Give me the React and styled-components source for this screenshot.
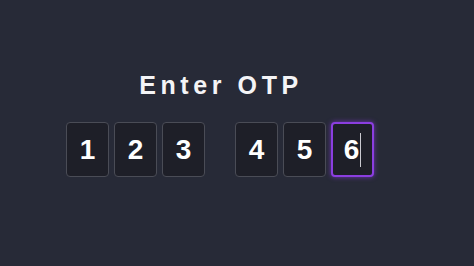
import React from "react";
import styled, { createGlobalStyle } from "styled-components";

const Global = createGlobalStyle`
  html, body { margin: 0; padding: 0; background: #272a37; }
  body { font-family: "Liberation Sans", Arial, sans-serif; }
`;

const Page = styled.div`
  width: 440px;
  height: 266px;
  display: flex;
  flex-direction: column;
  align-items: center;
  padding-top: 70px;
  box-sizing: border-box;
`;

const Title = styled.h1`
  margin: 0 0 21px 2px;
  font-size: 25px;
  line-height: 31px;
  font-weight: 700;
  letter-spacing: 4.6px;
  color: #f4f4f6;
`;

const Row = styled.div`
  display: flex;
  gap: 30px;
`;

const Group = styled.div`
  display: flex;
  gap: 5px;
`;

const Cell = styled.div`
  width: 43px;
  height: 55px;
  box-sizing: border-box;
  border-radius: 4px;
  background: #1e1f28;
  border: ${(p) => (p.$active ? "2px solid #8b3ee0" : "1px solid #4a4c56")};
  box-shadow: ${(p) => (p.$active ? "0 0 5px rgba(140, 60, 230, 0.7)" : "none")};
  display: flex;
  align-items: center;
  justify-content: center;
  color: #ffffff;
  font-size: 28px;
  font-weight: 700;
  line-height: 1;
`;

const Caret = styled.span`
  display: inline-block;
  width: 1px;
  height: 34px;
  margin-left: 1px;
  background: #c9c9d0;
`;

export default function App() {
  const first = ["1", "2", "3"];
  const second = ["4", "5", "6"];
  return (
    <>
      <Global />
      <Page>
        <Title>Enter OTP</Title>
        <Row>
          <Group>
            {first.map((d) => (
              <Cell key={d}>{d}</Cell>
            ))}
          </Group>
          <Group>
            {second.map((d, i) => (
              <Cell key={d} $active={i === 2}>
                {d}
                {i === 2 && <Caret />}
              </Cell>
            ))}
          </Group>
        </Row>
      </Page>
    </>
  );
}
